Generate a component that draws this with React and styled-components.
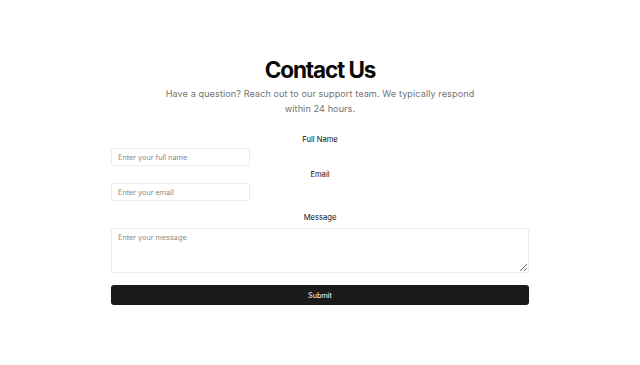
import React from 'react';
import styled, { createGlobalStyle } from 'styled-components';

const Global = createGlobalStyle`
	body {
		margin: 0;
		background: #ffffff;
		font-family: Inter, "Noto Sans", sans-serif;
	}
`;

const Page = styled.div`
	width: 418px;
	margin: 0 auto;
	padding-top: 56px;
`;

const Title = styled.h1`
	margin: 0;
	text-align: center;
	font-size: 22.5px;
	line-height: 28px;
	font-weight: 700;
	letter-spacing: -0.05em;
	color: #0a0a0a;
`;

const Subtitle = styled.p`
	margin: 2px auto 0;
	max-width: 316px;
	text-align: center;
	font-size: 9.1px;
	line-height: 15px;
	color: #737373;
	letter-spacing: 0.01em;
`;

const Form = styled.form`
	margin-top: 18px;
	display: flex;
	flex-direction: column;
`;

const Label = styled.label`
	display: block;
	text-align: center;
	font-size: 7.6px;
	line-height: 12px;
	color: #111;
	margin-top: ${(p) => p.$gap || 0}px;
`;

const Input = styled.input`
	box-sizing: border-box;
	width: 139px;
	height: 18px;
	margin-top: 2px;
	padding: 0 6px;
	border: 1px solid #ececec;
	border-radius: 2px;
	font-family: inherit;
	font-size: 7.3px;
	color: #111;
	outline: none;
	&::placeholder {
		color: #8a8a8a;
	}
`;

const TextArea = styled.textarea`
	box-sizing: border-box;
	width: 100%;
	height: 45px;
	margin-top: 4px;
	padding: 4px 6px;
	border: 1px solid #ececec;
	border-radius: 2px;
	font-family: inherit;
	font-size: 7.3px;
	color: #111;
	outline: none;
	resize: vertical;
	&::placeholder {
		color: #8a8a8a;
	}
`;

const Button = styled.button`
	margin-top: 12px;
	height: 20px;
	width: 100%;
	border: none;
	border-radius: 3px;
	background: #1a1a1a;
	color: #fff;
	font-family: inherit;
	font-size: 7.3px;
	font-weight: 400;
	cursor: pointer;
`;

export default function App() {
	return (
		<>
			<Global />
			<Page>
				<Title>Contact Us</Title>
				<Subtitle>
					Have a question? Reach out to our support team. We typically respond within 24 hours.
				</Subtitle>
				<Form onSubmit={(e) => e.preventDefault()}>
					<Label htmlFor="name">Full Name</Label>
					<Input id="name" placeholder="Enter your full name" />
					<Label htmlFor="email" $gap={3}>Email</Label>
					<Input id="email" type="email" placeholder="Enter your email" />
					<Label htmlFor="message" $gap={11}>Message</Label>
					<TextArea id="message" placeholder="Enter your message" />
					<Button type="submit">Submit</Button>
				</Form>
			</Page>
		</>
	);
}
